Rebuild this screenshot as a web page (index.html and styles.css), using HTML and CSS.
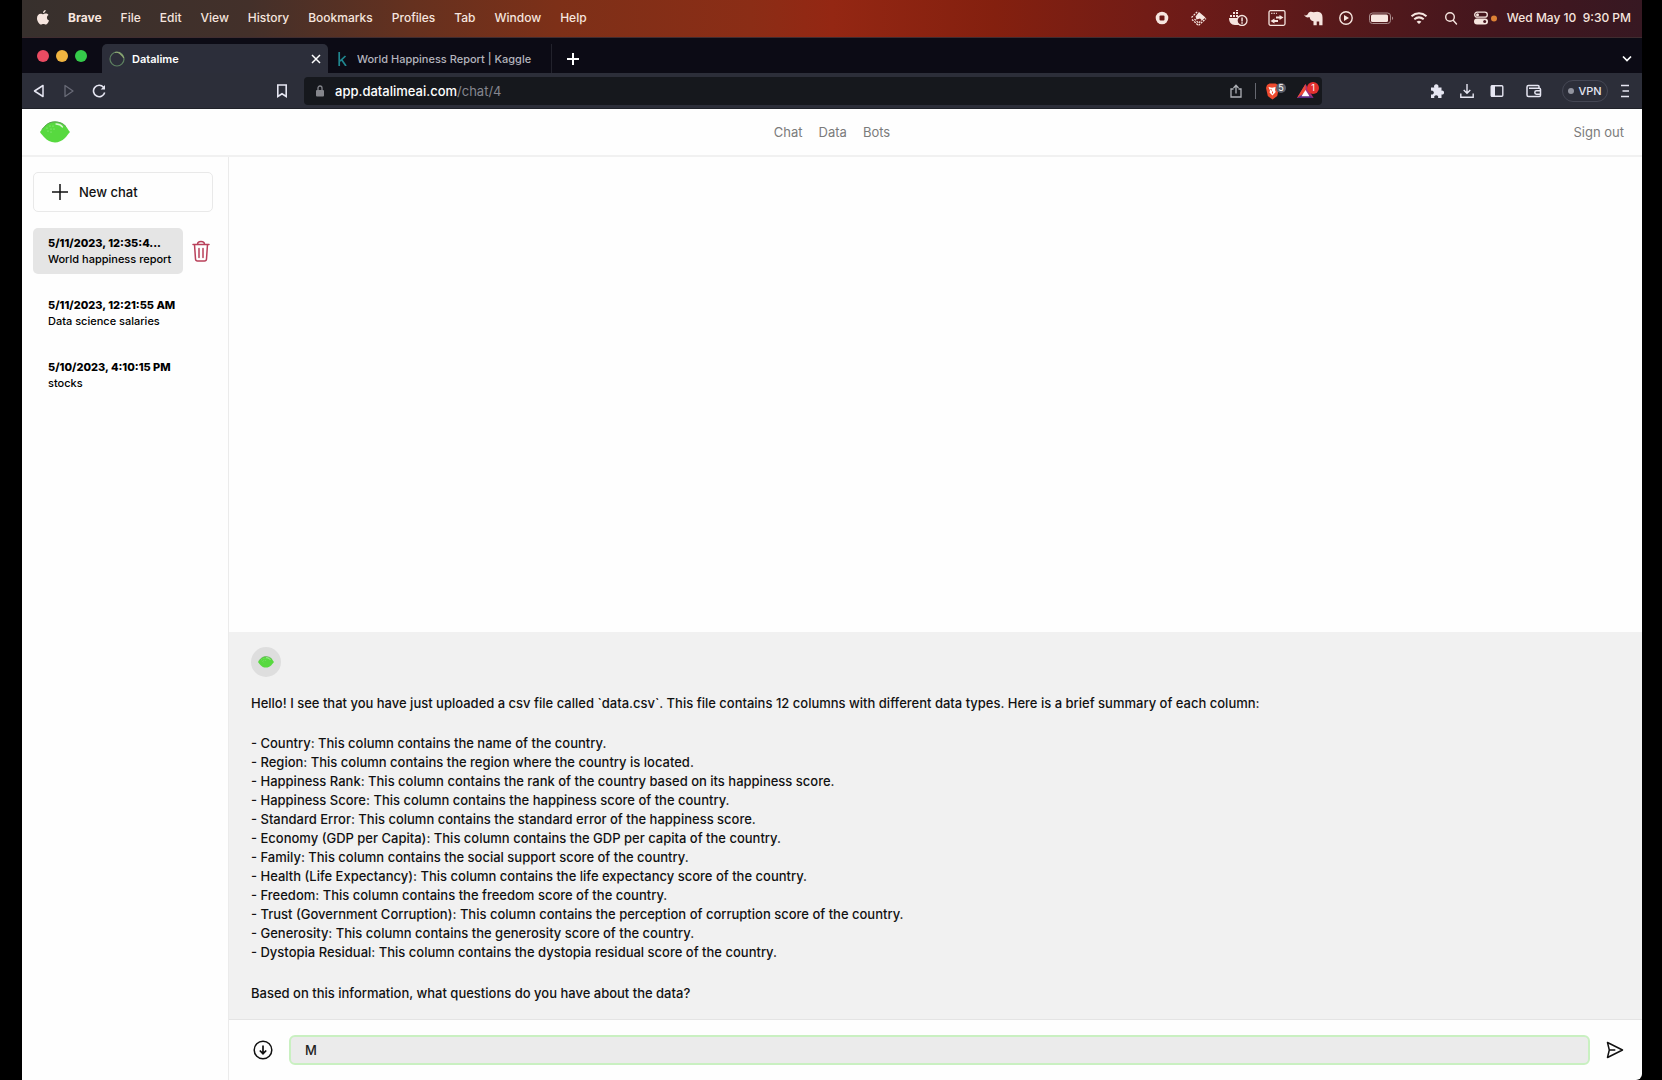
FILE: index.html
```html
<!DOCTYPE html>
<html lang="en">
<head>
<meta charset="utf-8">
<title>Datalime</title>
<link rel="stylesheet" href="styles.css">
</head>
<body>
<svg class="defs" aria-hidden="true">
  <symbol id="lime" viewBox="0 0 30 22">
    <path d="M0 11C1.500 8.500 4 6 6 4 9 1.200 12 .5 15.500.6 20 .7 23 2.500 25.500 5c2 2 3 4.500 4.500 6-1.500 1.500-3 4-5 6-3 3-6.500 4.400-10 4.400C10.500 21.400 7 19.500 4.500 16.500 3 14.800 1 13 0 11z" fill="#57d93f"/>
    <path d="M2 8.500C6 3.500 9 .9 15 .9c4 0 8 1.300 11 4.700" fill="none" stroke="#5aa352" stroke-width="1"/>
    <path d="M16 3c3 0 5 1 6.500 3" fill="none" stroke="#d9f8d2" stroke-width="1.300" stroke-linecap="round"/>
    <g fill="#a5ee96"><circle cx="7" cy="7" r=".6"/><circle cx="10" cy="5" r=".6"/><circle cx="11" cy="8" r=".6"/><circle cx="13" cy="5" r=".6"/><circle cx="8" cy="10" r=".6"/><circle cx="14" cy="8" r=".6"/><circle cx="11" cy="11" r=".6"/></g>
  </symbol>
</svg>
<div class="screen">
  <header class="menubar">
    <nav class="menus" aria-label="Menu bar">
      <svg class="apple" viewBox="0 0 12 15" width="12" height="15" fill="currentColor"><path d="M8.700 0c.1 1.500-1.200 3.100-2.700 3.100C5.800 1.600 7.200.2 8.700 0zM6.200 4.300c.6 0 1.400-.7 2.600-.7 1 0 2 .5 2.700 1.400-2.300 1.400-1.900 4.600.5 5.500-.6 1.800-1.900 4-3.200 4-.9 0-1.300-.6-2.400-.6s-1.500.6-2.400.6C2.300 14.500 0 11.300 0 8.200c0-2.900 1.800-4.500 3.600-4.500 1.200 0 2 .6 2.600.6z"/></svg>
      <strong>Brave</strong><span>File</span><span>Edit</span><span>View</span><span>History</span><span>Bookmarks</span><span>Profiles</span><span>Tab</span><span>Window</span><span>Help</span>
    </nav>
    <div class="status">
      <svg viewBox="0 0 20 16" width="20" height="16"><circle cx="10" cy="8" r="6.300" fill="currentColor"/><rect x="7.500" y="5.500" width="5" height="5" rx="1" fill="#6b1a18"/></svg>
      <svg viewBox="0 0 24 16" width="24" height="16" fill="none" stroke="currentColor"><path d="M4.500 7.500l6.500-6.500M5 9.500l6.500 6L19 8.500" stroke-width="1.300" stroke-dasharray="2 1"/><path d="M8.500 6.500L12 2l6.500 5.500-3.500 3-2-2-3.500 1z" fill="currentColor" stroke="none"/><path d="M7.500 9l4 4 3-2.500" stroke-width="1.200" stroke-dasharray="2 1"/></svg>
      <svg viewBox="0 0 24 16" width="24" height="16" fill="currentColor"><path d="M3 8h12c-3 1-3 4-2 7H9c-4 0-6-3-6-7zM4 5h2v2H4zM7 5h2v2H7zM10 5h2v2h-2zM7 2h2v2H7zM10 2h2v2h-2zM10 0h2v1h-2z"/><circle cx="16" cy="10.500" r="5" fill="#5a1a1b" stroke="currentColor" stroke-width="1.300"/><path d="M15.300 7.500h1.500v4h-1.500zM15.300 12.300h1.500v1.500h-1.500z"/></svg>
      <svg viewBox="0 0 24 16" width="24" height="16" fill="none" stroke="currentColor"><rect x="4" y=".7" width="16" height="14.600" rx="1.500" stroke-width="1.300"/><path d="M6 3.300h6" stroke-dasharray="1.500 1"/><path d="M11 6.500h3.500V5l4 2.500-4 2.500V8.500H11zM13 12H9.500v1.500l-4-2.500 4-2.500V10H13z" fill="currentColor" stroke="none"/></svg>
      <svg viewBox="0 0 20 16" width="20" height="16" fill="currentColor"><path d="M0 4.500c1.500 1.500 3 1 4-.7C5 1.500 7.500 1.500 9.500 2.300 13.500 1 17 1.500 18.200 5c.6 3 .3 6 .3 10.200h-3.300V11.500h-2.500v3.700H9.500v-4C7 11 6.200 9.500 5.500 7 3.500 8 1 7 0 4.500z"/></svg>
      <svg viewBox="0 0 14 16" width="14" height="16"><circle cx="7" cy="8" r="6.200" fill="none" stroke="currentColor" stroke-width="1.400"/><path d="M5 5l5 3-5 3z" fill="currentColor"/></svg>
      <svg viewBox="0 0 26 16" width="26" height="16"><rect x="1.500" y="3" width="21" height="10.500" rx="3" fill="none" stroke="#a98b8b"/><rect x="3" y="4.500" width="17" height="7.500" rx="1.500" fill="currentColor"/><path d="M24 6.500c1.500.5 1.500 3 0 3.500z" fill="#a98b8b"/></svg>
      <svg viewBox="0 0 20 16" width="20" height="16" fill="none" stroke="currentColor" stroke-width="2"><path d="M2.500 6.200c4.500-4 10.500-4 15 0M5.300 9.300c3-2.500 6.400-2.500 9.400 0"/><path d="M7.600 11.700c1.500-1.300 3.300-1.300 4.800 0L10 14z" fill="currentColor" stroke="none"/></svg>
      <svg viewBox="0 0 14 16" width="14" height="16" fill="none" stroke="currentColor" stroke-width="1.400"><circle cx="6" cy="7" r="4.300"/><path d="M9.200 10.300l3.300 3.700" stroke-linecap="round"/></svg>
      <svg viewBox="0 0 24 16" width="24" height="16"><rect x="1.700" y="2.200" width="12.600" height="5" rx="2.500" fill="none" stroke="currentColor" stroke-width="1.300"/><circle cx="4.500" cy="4.700" r="1.500" fill="currentColor"/><rect x="1" y="8.500" width="14" height="6" rx="3" fill="currentColor"/><circle cx="11.700" cy="11.500" r="1.500" fill="#451520"/><circle cx="21" cy="8.500" r="3" fill="#dd8236"/></svg>
      <time class="clock">Wed May 10&nbsp; 9:30 PM</time>
    </div>
  </header>

  <div class="tabstrip">
    <div class="lights"><i class="light red"></i><i class="light yellow"></i><i class="light green"></i></div>
    <div class="tab tab-active">
      <svg viewBox="0 0 16 16" width="16" height="16" fill="none"><circle cx="8" cy="8" r="7" stroke="#5d8060" stroke-width="1.200"/><path d="M6 1.500C9 .5 13 3 14.800 7M10 1.500l3.500 3.500" stroke="#8fa873" stroke-width="1.200"/></svg>
      <span class="tab-title">Datalime</span>
      <button class="icon-btn" aria-label="Close tab"><svg viewBox="0 0 10 10" width="10" height="10" stroke="currentColor" stroke-width="1.500"><path d="M1 1l8 8M9 1L1 9"/></svg></button>
    </div>
    <div class="tab tab-idle">
      <svg viewBox="0 0 9 14" width="9" height="14" fill="none" stroke="#20868e" stroke-width="1.700"><path d="M1.200 0v14M7.500 4L2 9.200M3.500 7.500L8 14"/></svg>
      <span class="tab-title">World Happiness Report | Kaggle</span>
    </div>
    <button class="icon-btn new-tab" aria-label="New tab"><svg viewBox="0 0 12 12" width="12" height="12" stroke="currentColor" stroke-width="2"><path d="M6 0v12M0 6h12"/></svg></button>
    <button class="icon-btn tab-search" aria-label="Search tabs"><svg viewBox="0 0 10 8" width="10" height="8" fill="none" stroke="currentColor" stroke-width="1.700"><path d="M1 1.500l4 4 4-4"/></svg></button>
  </div>

  <div class="toolbar">
    <div class="history">
      <button class="icon-btn" aria-label="Back"><svg viewBox="0 0 14 14" width="14" height="14" fill="none" stroke="currentColor" stroke-width="1.500" stroke-linejoin="round"><path d="M11 1.500v11L2.500 7z"/></svg></button>
      <button class="icon-btn faded" aria-label="Forward"><svg viewBox="0 0 14 14" width="14" height="14" fill="none" stroke="currentColor" stroke-width="1.300" stroke-linejoin="round"><path d="M3 1.500v11L11 7z"/></svg></button>
      <button class="icon-btn" aria-label="Reload"><svg viewBox="0 0 14 14" width="14" height="14" fill="none" stroke="currentColor" stroke-width="1.600"><path d="M11.500 3.200A5.700 5.700 0 1 0 12.700 8.500"/><path d="M13 1v4.500H8.700z" fill="currentColor" stroke="none"/></svg></button>
    </div>
    <button class="icon-btn" aria-label="Bookmark"><svg viewBox="0 0 12 14" width="12" height="14" fill="none" stroke="currentColor" stroke-width="1.600"><path d="M1.800 1h8.400v11.500L6 9.800l-4.200 2.700z"/></svg></button>
    <div class="address">
      <svg viewBox="0 0 10 12" width="10" height="12"><rect x="1" y="5" width="8" height="6.500" rx="1" fill="#85868c"/><path d="M3 5V3a2 2 0 0 1 4 0v2" fill="none" stroke="#85868c" stroke-width="1.300"/></svg>
      <span class="url">app.datalimeai.com<span class="path">/chat/4</span></span>
      <svg viewBox="0 0 12 14" width="12" height="14" fill="none" stroke="#aeb0b6" stroke-width="1.300"><path d="M3.500 5H1v8h10V5H8.500M6 9.500V1.500M3.500 4L6 1.300 8.500 4"/></svg>
      <i class="rule"></i>
      <svg viewBox="0 0 22 18" width="22" height="18"><path d="M3 3l2.500-1.500h6L14 3l1 3-1.800 8L8.500 17.500l-4.700-3.500L2 6z" fill="#ee4a2f"/><path d="M4.500 5l3.500.7L11.500 5 11 8l.7 2-3.200 3.500L5.500 10.500 6 8.500z" fill="#fff"/><path d="M6.500 7.500l1.500.7M8.500 9.500v2" stroke="#ee4a2f"/><circle cx="17" cy="6" r="5" fill="#5b5e69"/><text x="17" y="9" class="badge">5</text></svg>
      <svg class="bat" viewBox="0 0 24 18" width="24" height="18"><path d="M1 16L9.500 2l8 14z" fill="#a63078"/><path d="M1 16L9.500 2v8z" fill="#ef4a35"/><path d="M1 16l8.500-5 8 5z" fill="#5b2b83"/><path d="M9.500 8l4 6.300h-8z" fill="#fff"/><circle cx="17" cy="6" r="6" fill="#e3302f"/><text x="17" y="9" class="badge">1</text></svg>
    </div>
    <div class="tools">
      <svg viewBox="0 0 14 14" width="14" height="14" fill="currentColor"><path d="M1 3.500h3.300a2.200 2.200 0 1 1 3.900 0H11.500v3.200a2 2 0 1 1 0 3.800V14H8a2 2 0 1 0-3.600 0H1v-3.600a2 2 0 1 0 0-3.600z"/></svg>
      <svg viewBox="0 0 14 14" width="14" height="14" fill="none" stroke="currentColor" stroke-width="1.400"><path d="M7 0v9M3.700 6L7 9.300 10.300 6M.8 9.500v3.700h12.400V9.500"/></svg>
      <svg viewBox="0 0 14 14" width="14" height="14"><rect x="1.200" y="1.700" width="11.600" height="10.600" rx="1" fill="none" stroke="currentColor" stroke-width="1.400"/><path d="M1 1.500h4v11H1z" fill="currentColor"/></svg>
      <svg class="wallet" viewBox="0 0 16 14" width="16" height="14" fill="none" stroke="currentColor" stroke-width="1.500"><path d="M13 4V2.500c0-.6-.4-1-1-1H2.500C1.500 1.500 1 2 1 3v8c0 1 .5 1.500 1.500 1.500h10.800c.8 0 1.200-.5 1.200-1.200V5.500c0-.8-.4-1.200-1.200-1.200H3M14.500 6.800H10.500a1.700 1.700 0 0 0 0 3.400h4"/></svg>
      <button class="vpn"><i class="dot"></i>VPN</button>
      <button class="icon-btn" aria-label="Menu"><svg viewBox="0 0 10 14" width="10" height="14" stroke="currentColor" stroke-width="1.500"><path d="M1 1.500h8M2.500 7H9M1 12.500h8"/></svg></button>
    </div>
  </div>

  <div class="app">
    <header class="app-header">
      <a class="brand" href="#" aria-label="Datalime"><svg width="30" height="22"><use href="#lime"/></svg></a>
      <nav class="app-nav"><a href="#">Chat</a><a href="#">Data</a><a href="#">Bots</a></nav>
      <a class="signout" href="#">Sign out</a>
    </header>
    <div class="workspace">
      <aside class="sidebar">
        <button class="new-chat"><svg viewBox="0 0 16 16" width="16" height="16" stroke="currentColor" stroke-width="1.500"><path d="M8 0v16M0 8h16"/></svg>New chat</button>
        <div class="chat-row">
          <a class="chat-link current" href="#"><strong>5/11/2023, 12:35:4...</strong><span>World happiness report</span></a>
          <button class="trash" aria-label="Delete chat"><svg viewBox="0 0 18 22" width="18" height="22" fill="none" stroke="currentColor" stroke-width="1.500" stroke-linecap="round" stroke-linejoin="round"><path d="M1 4.500h16M5.500 4.500c0-4 7-4 7 0M2.500 4.500l1 14.500c.1 1.300.8 2 2 2h7c1.200 0 1.900-.7 2-2l1-14.500M7 8.500v9M11 8.500v9"/></svg></button>
        </div>
        <div class="chat-row"><a class="chat-link" href="#"><strong>5/11/2023, 12:21:55 AM</strong><span>Data science salaries</span></a></div>
        <div class="chat-row"><a class="chat-link" href="#"><strong>5/10/2023, 4:10:15 PM</strong><span>stocks</span></a></div>
      </aside>
      <main class="chat">
        <article class="message">
          <div class="avatar"><svg width="16" height="12"><use href="#lime"/></svg></div>
          <p>Hello! I see that you have just uploaded a csv file called `data.csv`. This file contains 12 columns with different data types. Here is a brief summary of each column:</p>
          <ul class="columns">
            <li>- Country: This column contains the name of the country.</li>
            <li>- Region: This column contains the region where the country is located.</li>
            <li>- Happiness Rank: This column contains the rank of the country based on its happiness score.</li>
            <li>- Happiness Score: This column contains the happiness score of the country.</li>
            <li>- Standard Error: This column contains the standard error of the happiness score.</li>
            <li>- Economy (GDP per Capita): This column contains the GDP per capita of the country.</li>
            <li>- Family: This column contains the social support score of the country.</li>
            <li>- Health (Life Expectancy): This column contains the life expectancy score of the country.</li>
            <li>- Freedom: This column contains the freedom score of the country.</li>
            <li>- Trust (Government Corruption): This column contains the perception of corruption score of the country.</li>
            <li>- Generosity: This column contains the generosity score of the country.</li>
            <li>- Dystopia Residual: This column contains the dystopia residual score of the country.</li>
          </ul>
          <p>Based on this information, what questions do you have about the data?</p>
        </article>
        <form class="composer">
          <button type="button" class="icon-btn" aria-label="Scroll to bottom"><svg viewBox="0 0 20 20" width="20" height="20" fill="none" stroke="currentColor" stroke-width="1.500"><circle cx="10" cy="10" r="8.800"/><path d="M10 5.500v8M6.800 10.500l3.200 3.200 3.200-3.200" stroke-width="1.700"/></svg></button>
          <input class="prompt" type="text" value="M" aria-label="Message">
          <button type="button" class="icon-btn" aria-label="Send"><svg viewBox="0 0 18 18" width="18" height="18" fill="none" stroke="currentColor" stroke-width="1.500" stroke-linejoin="round"><path d="M1.500 1.500L16.500 9l-15 7.500L3.300 9zM3.300 9h6"/></svg></button>
        </form>
      </main>
    </div>
  </div>
</div>
</body>
</html>
```
FILE: styles.css
```css
* { box-sizing: border-box; }
body {
  margin: 0;
  background: #000;
  font-family: Inter, "Liberation Sans", sans-serif;
  font-size: 13px;
  color: #111;
}
button { font: inherit; color: inherit; background: none; border: 0; padding: 0; }
a { color: inherit; text-decoration: none; }
svg { flex: none; display: block; }
.defs { width: 0; height: 0; position: absolute; }

.screen {
  display: flex;
  flex-direction: column;
  min-height: 100vh;
  padding: 0 20px 0 22px;
}

/* System menu bar */
.menubar {
  display: flex;
  justify-content: space-between;
  align-items: center;
  height: 38px;
  padding: 0 11px 2px 15px;
  color: #f6e5df;
  font-size: 12px;
  font-weight: 500;
  background: linear-gradient(90deg, #37302d 0%, #43302a 14%, #65311f 24%, #7d3018 33%, #8b2d16 45%, #942713 50%, #84200f 60%, #6d1b18 72%, #55191b 82%, #43161e 91%, #371822 100%);
  border-bottom: 1px solid #3f2c30;
}
.menus, .status, .lights, .history, .tools, .tab, .address { display: flex; align-items: center; }
.menus { gap: 19px; }
.menus strong { font-size: 12px; }
.status { gap: 15px; }
.clock { margin-left: -5px; }

/* Tabs */
.tabstrip {
  display: flex;
  align-items: flex-end;
  height: 35px;
  background: #0c0b15;
  color: #fff;
  font-size: 11px;
}
.icon-btn { display: flex; align-items: center; justify-content: center; }
.lights { gap: 7px; padding: 0 15px; align-self: center; }
.light { width: 12px; height: 12px; border-radius: 50%; }
.red { background: #ea4b62; }
.yellow { background: #f0b440; }
.green { background: #35cb4a; }
.tab { height: 29px; }
.tab-active {
  width: 226px;
  padding: 0 7px;
  gap: 7px;
  background: #2c2e3a;
  border-radius: 5px 5px 0 0;
  font-weight: 600;
}
.tab-active .tab-title { flex: 1; }
.tab-idle {
  padding: 0 20px 0 10px;
  gap: 10px;
  color: #b4b4bd;
  font-weight: 500;
  border-right: 1px solid #22222c;
}
.new-tab { height: 29px; margin-left: 15px; }
.tab-search { height: 29px; margin-left: auto; margin-right: 10px; }

/* Toolbar */
.toolbar {
  display: flex;
  align-items: center;
  height: 36px;
  padding: 0 12px 0 10px;
  background: #2c2e39;
  border-bottom: 1px solid #202229;
  color: #e6e6f2;
}
.history { gap: 16px; margin-right: 170px; }
.faded { color: #696b77; }
.address {
  flex: 1;
  height: 28px;
  margin: 0 108px 0 16px;
  padding: 0 2px 0 11px;
  background: #16181d;
  border-radius: 4px;
  color: #fff;
}
.url { flex: 1; margin-left: 10px; font-weight: 500; }
.path { color: #85868e; font-weight: 400; }
.rule { width: 1px; height: 16px; margin: 0 8px 0 13px; background: #666870; }
.bat { margin-left: 10px; }
.badge { font-size: 9px; fill: #fff; text-anchor: middle; }
.tools { gap: 16px; }
.wallet { margin: 0 4px 0 6px; }
.vpn {
  display: flex;
  align-items: center;
  justify-content: center;
  gap: 4px;
  width: 46px;
  height: 22px;
  border: 1px solid #454754;
  border-radius: 11px;
  font-size: 11px;
  font-weight: 500;
}
.dot { width: 6px; height: 6px; border-radius: 50%; background: #92949f; }
.vpn + .icon-btn { margin-left: -4px; }

/* App */
.app {
  display: flex;
  flex-direction: column;
  flex: 1;
  background: #fefefe;
  border-radius: 0 0 6px 0;
}
.app-header {
  display: grid;
  grid-template-columns: 1fr auto 1fr;
  align-items: center;
  height: 48px;
  padding: 0 18px;
  border-bottom: 2px solid #f1f1f1;
  color: #7b7b7b;
}
.app-nav { display: flex; gap: 16px; }
.signout { justify-self: end; }
.workspace { display: flex; flex: 1; }
.sidebar {
  display: flex;
  flex-direction: column;
  gap: 16px;
  width: 207px;
  padding: 15px 15px 0 11px;
  border-right: 1px solid #ebebeb;
}
.new-chat {
  display: flex;
  align-items: center;
  gap: 11px;
  height: 40px;
  padding: 0 18px;
  border: 1px solid #e9e9e9;
  border-radius: 5px;
  font-weight: 500;
}
.chat-row { display: flex; align-items: center; gap: 9px; }
.chat-link {
  display: flex;
  flex-direction: column;
  flex: 1;
  min-width: 0;
  padding: 7px 8px 7px 15px;
  border-radius: 5px;
  font-size: 11px;
  font-weight: 500;
  line-height: 16px;
  white-space: nowrap;
  color: #000;
}
.chat-link strong { font-weight: 800; }
.current { background: #e5e5e5; }
.trash { color: #b9405a; margin-right: 3px; }

.chat { display: flex; flex-direction: column; flex: 1; min-width: 0; }
.message {
  margin-top: auto;
  padding: 15px 22px 16px;
  background: #f1f1f1;
  font-weight: 500;
  line-height: 19px;
}
.message p { margin: 17px 0 0; }
.avatar {
  display: grid;
  place-items: center;
  width: 30px;
  height: 30px;
  border-radius: 50%;
  background: #dedede;
}
.columns { margin: 21px 0 22px; padding: 0; list-style: none; }
.message .columns + p { margin-top: 0; }
.composer {
  display: flex;
  align-items: center;
  gap: 16px;
  height: 61px;
  padding: 0 18px 0 24px;
  border-top: 1px solid #e4e4e4;
}
.prompt {
  flex: 1;
  min-width: 0;
  height: 30px;
  padding: 0 14px;
  border: 2px solid #c9f0c1;
  border-radius: 6px;
  background: #ebebeb;
  color: #222;
  font: inherit;
  font-weight: 500;
}
```
